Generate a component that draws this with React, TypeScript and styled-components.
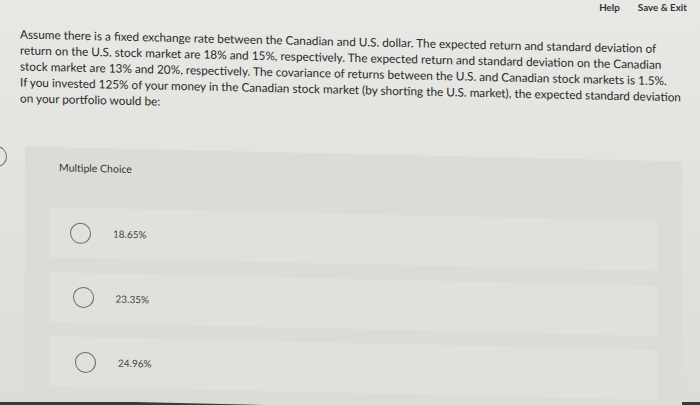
import React from 'react';
import styled, { createGlobalStyle } from 'styled-components';

const GlobalStyle = createGlobalStyle`
  html, body {
    margin: 0;
    padding: 0;
    background: #e3e3df;
  }
  * {
    box-sizing: border-box;
  }
`;

const Page = styled.div`
  width: 700px;
  height: 405px;
  overflow: hidden;
  display: flex;
  flex-direction: column;
  background: linear-gradient(180deg, #e8e8e5 0%, #e2e2de 45%, #dcdcd8 100%);
  font-family: Lato, 'Open Sans', Arial, sans-serif;
  color: #2d2d2d;
`;

const TopBar = styled.div`
  height: 14px;
  display: flex;
  justify-content: flex-end;
  align-items: center;
  gap: 18px;
  padding-right: 13px;
`;

const TopLink = styled.span`
  font-size: 9.8px;
  font-weight: 700;
  color: #333;
`;

const Main = styled.div`
  flex: 1;
  transform-origin: 0 0;
  transform: skewY(1.3deg);
`;

const Question = styled.p`
  margin: 11.5px 0 0 20px;
  font-size: 11.8px;
  line-height: 16px;
  white-space: nowrap;
  color: #2a2a2a;
`;

const PanelRow = styled.div`
  display: flex;
  align-items: flex-start;
  gap: 18px;
  margin-top: 40.5px;
`;

const PrevNub = styled.span`
  flex: none;
  width: 21px;
  height: 21px;
  margin-left: -14px;
  border: 1.3px solid #777;
  border-radius: 50%;
`;

const Panel = styled.section`
  width: 657px;
  background: #dcdcd7;
  padding: 14px 25px 14px 25px;
`;

const Label = styled.div`
  font-size: 10.5px;
  line-height: 12px;
  color: #333;
  padding-left: 9px;
  margin-bottom: 34px;
`;

const OptionList = styled.div`
  display: flex;
  flex-direction: column;
  gap: 14.5px;
`;

const Option = styled.label<{ $shift: number }>`
  height: 50px;
  display: flex;
  align-items: center;
  gap: 22px;
  padding-left: ${(p) => 20 + p.$shift}px;
  background: #e0e0dc;
`;

const Radio = styled.span`
  flex: none;
  width: 21px;
  height: 21px;
  border: 1.3px solid #6e6e6e;
  border-radius: 50%;
`;

const OptionText = styled.span`
  font-size: 10px;
  color: #444;
`;

const Bezel = styled.div`
  height: 3px;
  background: #3b3b3b;
`;

const lines = [
  'Assume there is a fixed exchange rate between the Canadian and U.S. dollar. The expected return and standard deviation of',
  'return on the U.S. stock market are 18% and 15%, respectively. The expected return and standard deviation on the Canadian',
  'stock market are 13% and 20%, respectively. The covariance of returns between the U.S. and Canadian stock markets is 1.5%.',
  'If you invested 125% of your money in the Canadian stock market (by shorting the U.S. market), the expected standard deviation',
  'on your portfolio would be:',
];

const options = ['18.65%', '23.35%', '24.96%'];

export default function App() {
  return (
    <Page>
      <GlobalStyle />
      <TopBar>
        <TopLink>Help</TopLink>
        <TopLink>Save &amp; Exit</TopLink>
      </TopBar>
      <Main>
        <Question>
          {lines.map((l, i) => (
            <React.Fragment key={i}>
              {l}
              {i < lines.length - 1 ? <br /> : null}
            </React.Fragment>
          ))}
        </Question>
        <PanelRow>
          <PrevNub />
          <Panel>
            <Label>Multiple Choice</Label>
            <OptionList>
              {options.map((o, i) => (
                <Option key={o} $shift={i * 2.5}>
                  <Radio />
                  <OptionText>{o}</OptionText>
                </Option>
              ))}
            </OptionList>
          </Panel>
        </PanelRow>
      </Main>
      <Bezel />
    </Page>
  );
}
